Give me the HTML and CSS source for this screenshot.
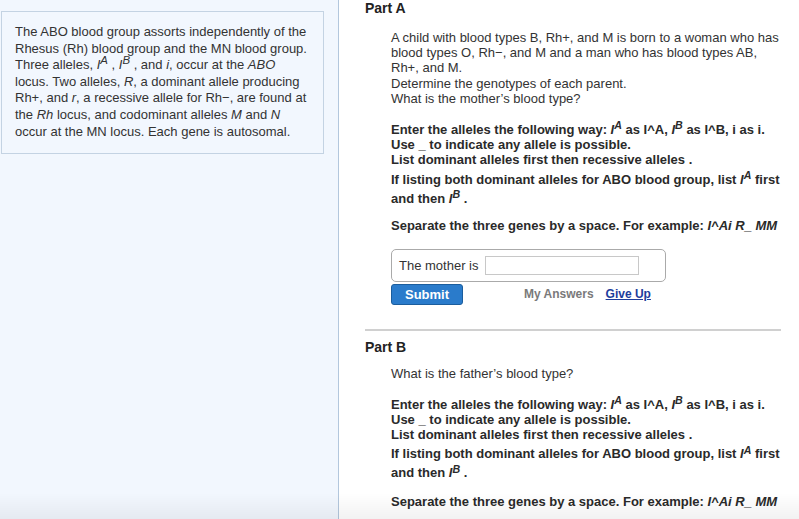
FILE: index.html
```html
<!DOCTYPE html>
<html lang="en">
  <head>
    <meta charset="UTF-8" />
    <meta name="viewport" content="width=device-width, initial-scale=1.0" />
    <title>Blood Groups - Parts A and B</title>
    <link rel="stylesheet" href="styles.css">
  </head>
  <body>
    <div class="page">
      <aside class="sidebar">
        <div class="intro">
          The ABO blood group assorts independently of the Rhesus (Rh) blood group and the MN blood group.
          Three alleles, <i>I<sup>A</sup></i> , <i>I<sup>B</sup></i> , and <i>i</i>, occur at the <i>ABO</i>
          locus. Two alleles, <i>R</i>, a dominant allele producing Rh+, and <i>r</i>, a recessive allele for
          Rh&minus;, are found at the <i>Rh</i> locus, and codominant alleles <i>M</i> and <i>N</i>
          occur at the MN locus. Each gene is autosomal.
        </div>
      </aside>

      <main class="content">
        <section class="part">
          <h2 class="part-title">Part A</h2>
          <div class="question">
            A child with blood types B, Rh+, and M is born to a woman who has blood types O, Rh&minus;, and M and a man who has blood types AB, Rh+, and M.<br>
            Determine the genotypes of each parent.<br>
            What is the mother’s blood type?
          </div>
          <div class="instructions">
            <div class="instr-lines">
              Enter the alleles the following way: <i>I<sup>A</sup></i> as I^A, <i>I<sup>B</sup></i> as I^B, i as i.<br>
              Use _ to indicate any allele is possible.<br>
              List dominant alleles first then recessive alleles .
            </div>
            <div class="instr-note">
              If listing both dominant alleles for ABO blood group, list <i>I<sup>A</sup></i> first and then <i>I<sup>B</sup></i> .
            </div>
            <div class="instr-example">
              Separate the three genes by a space. For example: <i>I^Ai R_ MM</i>
            </div>
          </div>
          <div class="answer-box">
            <label class="answer-label" for="mother">The mother is</label>
            <input class="answer-input" id="mother" type="text">
          </div>
          <div class="actions">
            <button class="btn-submit" type="button">Submit</button>
            <span class="my-answers">My Answers</span>
            <a class="give-up" href="#">Give Up</a>
          </div>
        </section>

        <hr class="divider">

        <section class="part">
          <h2 class="part-title">Part B</h2>
          <div class="question question-b">
            What is the father’s blood type?
          </div>
          <div class="instructions instructions-b">
            <div class="instr-lines">
              Enter the alleles the following way: <i>I<sup>A</sup></i> as I^A, <i>I<sup>B</sup></i> as I^B, i as i.<br>
              Use _ to indicate any allele is possible.<br>
              List dominant alleles first then recessive alleles .
            </div>
            <div class="instr-note">
              If listing both dominant alleles for ABO blood group, list <i>I<sup>A</sup></i> first and then <i>I<sup>B</sup></i> .
            </div>
            <div class="instr-example">
              Separate the three genes by a space. For example: <i>I^Ai R_ MM</i>
            </div>
          </div>
        </section>
      </main>
    </div>
    <div class="fade"></div>
  </body>
</html>
```

FILE: styles.css
```css
html,
body {
  margin: 0;
  height: 100%;
  overflow: hidden;
}
body {
  font-family: "Liberation Sans", Arial, sans-serif;
  font-size: 13px;
  color: #333;
  background: #fff;
}
.page {
  display: flex;
  height: 100%;
}
.sidebar {
  width: 338px;
  flex-shrink: 0;
  background-color: #f2f7fe;
  border-right: 1px solid #b3c7dd;
}
.intro {
  margin: 11px 14px 0 1px;
  padding: 12px 15px 13px 13px;
  border: 1px solid #c4d3e3;
  line-height: 16.6px;
}
sup {
  font-size: 88%;
  line-height: 0;
  vertical-align: baseline;
  position: relative;
  top: -0.45em;
}
.content {
  flex: 1;
  padding: 0 16px 0 26px;
}
.part-title {
  margin: 0;
  font-size: 14px;
  line-height: 16px;
  font-weight: bold;
  color: #222;
}
.question {
  margin: 14px 0 0 26px;
  line-height: 15.2px;
}
.question-b {
  margin-top: 11px;
}
.instructions {
  margin: 16px 0 0 26px;
  font-weight: bold;
  color: #2a2a2a;
}
.instructions-b {
  margin-top: 16px;
}
.instructions-b .instr-example {
  margin-top: 12px;
}
.instructions sup {
  font-size: 82%;
}
.instr-lines {
  line-height: 15.2px;
}
.instr-note {
  margin-top: 2px;
  line-height: 19px;
}
.instr-example {
  margin-top: 10px;
  line-height: 15px;
}
.answer-box {
  display: flex;
  align-items: center;
  box-sizing: border-box;
  width: 275px;
  height: 33px;
  margin: 16px 0 0 26px;
  padding: 0 7px;
  border: 1px solid #aaa;
  border-radius: 5px;
}
.answer-input {
  box-sizing: border-box;
  width: 154px;
  height: 19px;
  margin: 0 0 0 7px;
  border: 1px solid #c8c8c8;
  padding: 0 3px;
  font: inherit;
}
.actions {
  display: flex;
  align-items: center;
  margin: 2px 0 0 26px;
}
.btn-submit {
  box-sizing: border-box;
  width: 72px;
  height: 21px;
  padding: 0;
  border: 1px solid #1b5d9d;
  border-radius: 3px;
  background-color: #2a7bcb;
  color: #fff;
  font-family: inherit;
  font-size: 13px;
  font-weight: bold;
}
.my-answers {
  margin-left: 61px;
  font-size: 12px;
  font-weight: bold;
  color: #7a7a7a;
}
.give-up {
  margin-left: 12px;
  font-size: 12px;
  font-weight: bold;
  color: #1e3d9c;
  text-decoration: underline;
}
.divider {
  margin: 24px 2px 8px 0;
  border: none;
  border-top: 2px solid #d0d0d0;
}
.fade {
  position: fixed;
  left: 0;
  right: 0;
  bottom: 0;
  height: 26px;
  pointer-events: none;
  background: linear-gradient(rgba(0, 0, 0, 0), rgba(0, 0, 0, 0.05));
}
```
